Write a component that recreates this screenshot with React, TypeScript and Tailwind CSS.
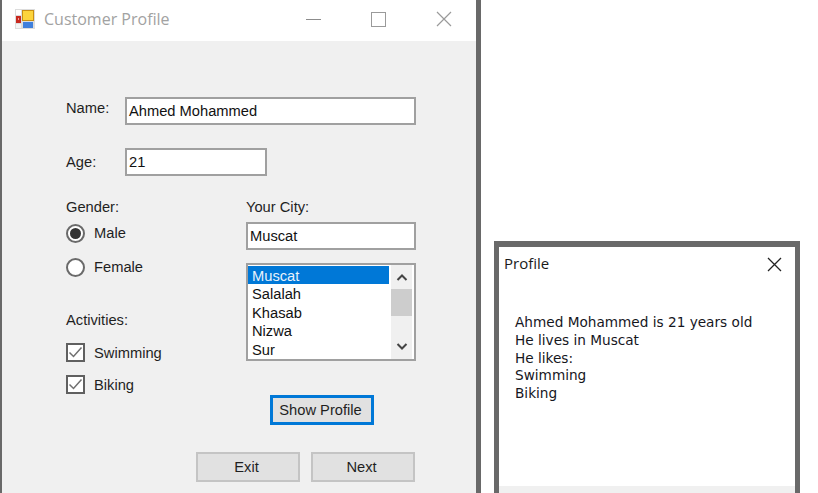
const AppIcon = () => (
  <svg width="20" height="20" viewBox="0 0 20 20" className="shrink-0">
    <rect x="0" y="0" width="20" height="20" fill="#dcdcdc" />
    <rect x="1" y="1" width="5" height="5" fill="#ffffff" />
    <rect x="1" y="7" width="5" height="7" fill="#c8281e" />
    <rect x="3" y="9" width="1" height="2" fill="#f0a0a0" />
    <rect x="7" y="1" width="12" height="11" fill="#c98f12" />
    <rect x="8" y="2" width="10" height="9" fill="#fcd43c" />
    <rect x="1" y="15" width="5" height="4" fill="#f4f4f4" />
    <rect x="8" y="13" width="10" height="6" fill="#3f7fdc" />
  </svg>
);

const Radio = ({ label, checked }: { label: string; checked?: boolean }) => (
  <div className="flex items-center gap-[9px] h-[20px]">
    <div className="w-[19px] h-[19px] rounded-full border-2 border-[#6a6a6a] bg-white flex items-center justify-center">
      {checked && <div className="w-[11px] h-[11px] rounded-full bg-[#333333]" />}
    </div>
    <span>{label}</span>
  </div>
);

const Check = ({ label }: { label: string }) => (
  <div className="flex items-center gap-[9px] h-[19px]">
    <div className="w-[19px] h-[19px] border-2 border-[#606060] bg-white flex items-center justify-center">
      <svg width="15" height="15" viewBox="0 0 15 15" fill="none" stroke="#707070" strokeWidth="1.5">
        <path d="M1.5 7.5l4 4 8-9" />
      </svg>
    </div>
    <span>{label}</span>
  </div>
);

const Field = ({ value, className }: { value: string; className: string }) => (
  <div className={`h-[28px] border-2 border-[#a0a0a0] bg-white pl-[2px] flex items-center text-[#111111] ${className}`}>
    {value}
  </div>
);

const WinButton = ({ label }: { label: string }) => (
  <div className="w-[104px] h-[30px] border-2 border-[#c4c4c4] bg-[#e1e1e1] pr-[3px] flex items-center justify-center">{label}</div>
);

const CustomerForm = () => (
  <div className="w-[481px] h-full shrink-0 flex flex-col border-l-[2px] border-r-[5px] border-[#696969] bg-[#f0f0f0]">
    <div className="h-[41px] bg-white flex items-center pl-[13px] pr-[24px] pb-[3px] shrink-0">
      <AppIcon />
      <span className="ml-[9px] text-[#a2a2a2] text-[16px] font-['Open_Sans',sans-serif]">Customer Profile</span>
      <div className="ml-auto flex items-center gap-[50px]">
        <div className="w-[15px] h-px bg-[#8c8c8c]" />
        <div className="w-[15px] h-[15px] border-[1.5px] border-[#9a9a9a]" />
        <svg width="16" height="16" viewBox="0 0 16 16" stroke="#9a9a9a" strokeWidth="1.2">
          <path d="M1 1l14 14M15 1L1 15" />
        </svg>
      </div>
    </div>
    <div className="flex-1 pl-[64px] pt-[56px] text-[14.7px] leading-[20px] text-[#1f1f1f] font-['Liberation_Sans',Arial,sans-serif]">
      <div className="flex items-center h-[28px]">
        <span className="w-[59px] -mt-[6px]">Name:</span>
        <Field value="Ahmed Mohammed" className="w-[291px]" />
      </div>
      <div className="flex items-center h-[28px] mt-[23px]">
        <span className="w-[59px]">Age:</span>
        <Field value="21" className="w-[142px]" />
      </div>
      <div className="flex mt-[21px]">
        <div className="w-[180px] flex flex-col">
          <span>Gender:</span>
          <div className="mt-[6px]"><Radio label="Male" checked /></div>
          <div className="mt-[14px]"><Radio label="Female" /></div>
          <span className="mt-[33px]">Activities:</span>
          <div className="mt-[13px]"><Check label="Swimming" /></div>
          <div className="mt-[13px]"><Check label="Biking" /></div>
        </div>
        <div className="w-[170px] flex flex-col">
          <span>Your City:</span>
          <Field value="Muscat" className="w-[170px] mt-[5px]" />
          <div className="h-[98px] mt-[13px] border-2 border-[#a0a0a0] bg-white flex text-[#111111] leading-[18.5px]">
            <div className="flex-1 pt-px pr-[2px] min-w-0">
              <div className="bg-[#0078d7] text-[#e8f2fb] h-[18px] leading-[20px] pl-[4px] mb-px">Muscat</div>
              <div className="pl-[4px]">Salalah</div>
              <div className="pl-[4px]">Khasab</div>
              <div className="pl-[4px]">Nizwa</div>
              <div className="pl-[4px]">Sur</div>
            </div>
            <div className="w-[21px] mr-[2px] bg-[#f0f0f0] flex flex-col items-center">
              <svg width="12" height="22" viewBox="0 0 12 22" fill="none" stroke="#444444" strokeWidth="2" className="mt-[2px] shrink-0">
                <path d="M1.5 13l4.5-4.5 4.5 4.5" />
              </svg>
              <div className="w-full h-[27px] bg-[#cdcdcd] shrink-0" />
              <svg width="12" height="20" viewBox="0 0 12 20" fill="none" stroke="#444444" strokeWidth="2" className="mt-auto mb-[3px]">
                <path d="M1.5 8l4.5 4.5 4.5-4.5" />
              </svg>
            </div>
          </div>
          <div className="w-[104px] h-[30px] ml-[24px] mt-[34px] border-[3px] border-[#0078d7] bg-[#e1e1e1] pr-[3px] flex items-center justify-center">
            Show Profile
          </div>
        </div>
      </div>
      <div className="flex gap-[11px] ml-[130px] mt-[27px]">
        <WinButton label="Exit" />
        <WinButton label="Next" />
      </div>
    </div>
  </div>
);

const ProfileDialog = () => (
  <div className="w-[306px] h-[252px] ml-[13px] mt-[241px] flex flex-col border-x-[5px] border-t-[6px] border-[#696969] bg-white">
    <div className="h-[34px] flex items-center justify-between pl-[5px] pr-[13px] pb-[2px] text-[15px] text-[#1a1a1a] font-['Open_Sans',sans-serif] shrink-0">
      <span>Profile</span>
      <svg width="15" height="15" viewBox="0 0 15 15" stroke="#222222" strokeWidth="1.3" className="mt-[2px]">
        <path d="M1 1l13 13M14 1L1 14" />
      </svg>
    </div>
    <div className="flex-1 pt-[33px] pl-[16px] text-[13.65px] leading-[17.8px] text-[#16161d] font-['DejaVu_Sans',sans-serif]">
      <div>Ahmed Mohammed is 21 years old</div>
      <div>He lives in Muscat</div>
      <div>He likes:</div>
      <div>Swimming</div>
      <div>Biking</div>
    </div>
    <div className="h-[7px] bg-[#f0f0f0] shrink-0" />
  </div>
);

export default function App() {
  return (
    <div className="w-[818px] h-[493px] flex overflow-hidden bg-white">
      <CustomerForm />
      <ProfileDialog />
    </div>
  );
}
